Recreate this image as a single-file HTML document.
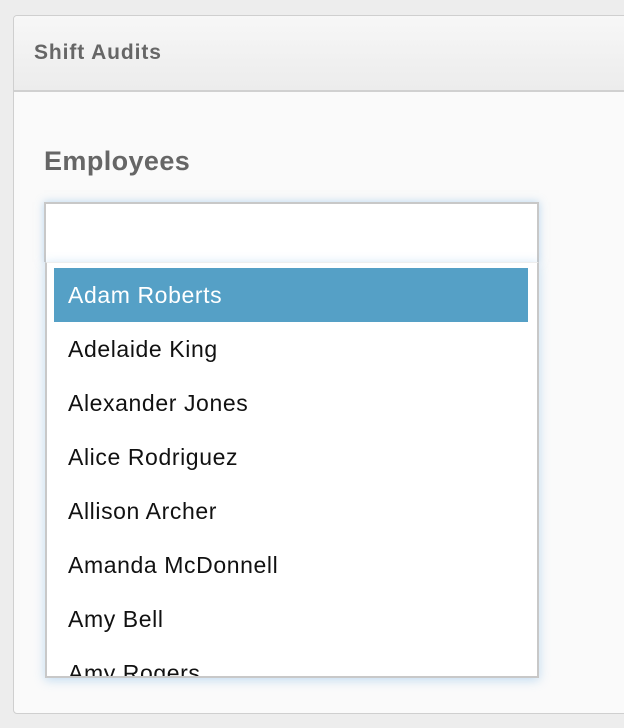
<!DOCTYPE html>
<html><head><style>
body{margin:0;width:624px;height:728px;background:#ededed;font-family:"Liberation Sans",sans-serif;overflow:hidden;position:relative}
.panel{position:absolute;left:13px;top:15px;width:640px;height:697px;border:1px solid #cfcfcf;border-radius:4px;background:#fafafa;overflow:hidden}
.hd{height:74px;border-bottom:2px solid #d0d0d0;background:linear-gradient(#f7f7f7,#ececec)}
.hd span{position:absolute;left:20px;top:25px;font-size:21px;font-weight:bold;color:#666;letter-spacing:0.9px}
.lbl{position:absolute;left:44px;top:146px;font-size:27px;font-weight:bold;color:#666;letter-spacing:0.4px}
.inp{position:absolute;left:44px;top:202px;width:491px;height:58px;background:#fff;border:2px solid #c8c8c8;border-bottom:none;box-shadow:0 0 8px rgba(120,180,230,.5)}
.dd{position:absolute;left:45px;top:262px;width:490px;height:413px;background:#fff;border:2px solid #c8c8c8;border-top:1px solid #eee;box-shadow:0 2px 10px rgba(120,180,230,.45);overflow:hidden}
.it{position:absolute;left:7px;width:474px;height:54px;line-height:54px;font-size:23px;color:#111;text-indent:14px;letter-spacing:0.6px}
.sel{background:#55a0c6;color:#fff}
</style></head><body>
<div class="panel"><div class="hd"><span>Shift Audits</span></div></div>
<div class="lbl">Employees</div>
<div class="inp"></div>
<div class="dd">
<div class="it sel" style="top:5px">Adam Roberts</div>
<div class="it" style="top:59px">Adelaide King</div>
<div class="it" style="top:113px">Alexander Jones</div>
<div class="it" style="top:167px">Alice Rodriguez</div>
<div class="it" style="top:221px">Allison Archer</div>
<div class="it" style="top:275px">Amanda McDonnell</div>
<div class="it" style="top:329px">Amy Bell</div>
<div class="it" style="top:383px">Amy Rogers</div>
</div>
</body></html>
